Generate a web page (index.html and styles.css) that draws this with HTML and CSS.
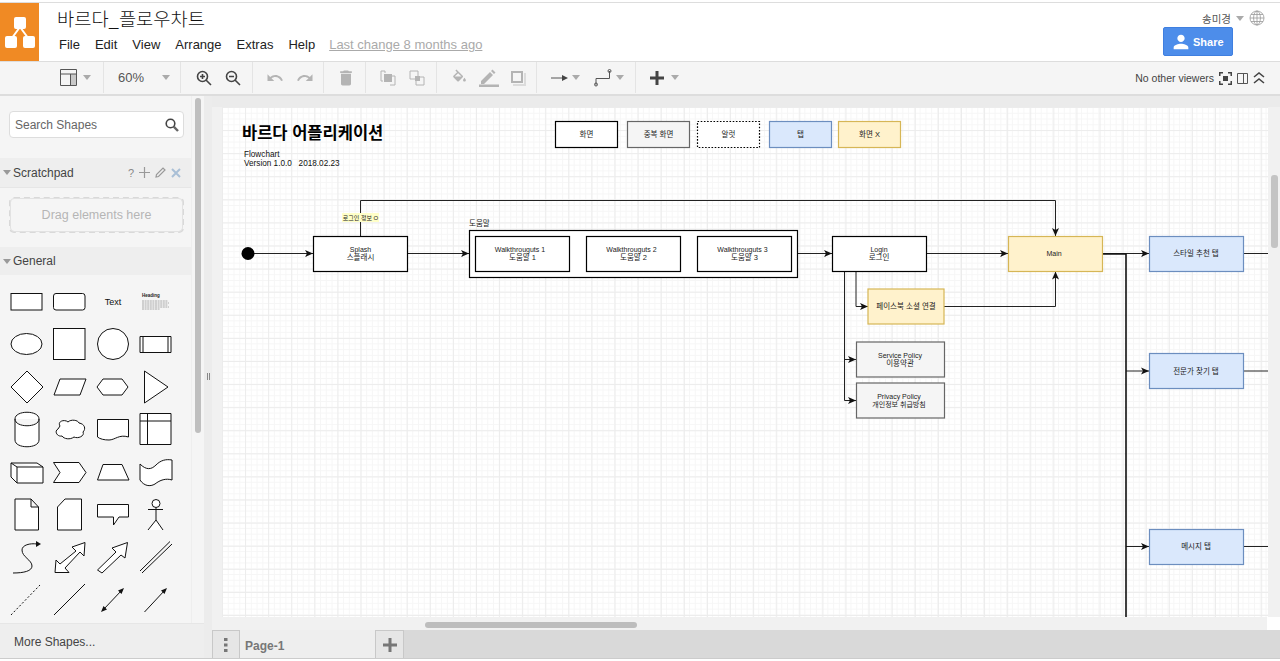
FILE: index.html
```html
<!DOCTYPE html>
<html lang="ko">
<head>
<meta charset="utf-8">
<title>바르다_플로우차트</title>
<link rel="stylesheet" href="styles.css">
</head>
<body>
<div class="app">
  <header class="header">
    <div class="logo">
      <svg width="39" height="58" viewBox="0 0 39 58"><path class="logo-link" d="M20 24 L9 39 M20 24 L31 39"/><rect class="logo-node" x="14" y="14" width="12" height="12" rx="2"/><rect class="logo-node" x="5" y="33" width="12" height="12" rx="2"/><rect class="logo-node" x="23" y="33" width="12" height="12" rx="2"/></svg>
    </div>
    <div class="doc">
      <div class="doc-title">바르다_플로우차트</div>
      <nav class="menu">
        <span>File</span><span>Edit</span><span>View</span><span>Arrange</span><span>Extras</span><span>Help</span>
        <span class="last-change">Last change 8 months ago</span>
      </nav>
    </div>
    <div class="account">
      <div class="user">
        <span>송미경</span><i class="caret"></i>
        <svg class="globe" width="16" height="16" viewBox="0 0 16 16"><circle cx="8" cy="8" r="7"/><ellipse cx="8" cy="8" rx="3.4" ry="7"/><path d="M8 1V15M1 8H15M2 4.5H14M2 11.5H14"/></svg>
      </div>
      <button class="share">
        <svg width="22" height="22" viewBox="0 0 24 24"><path d="M12 12c2.210 0 4-1.790 4-4s-1.790-4-4-4-4 1.790-4 4 1.790 4 4 4zm0 2c-2.670 0-8 1.340-8 4v2h16v-2c0-2.660-5.330-4-8-4z"/></svg>
        <span>Share</span>
      </button>
    </div>
  </header>

  <div class="toolbar">
    <div class="tb g1">
      <svg class="ic" width="17" height="17" viewBox="0 0 17 17"><path class="ln" d="M.5 .5H16.500V16.500H.5ZM.5 5H16.500M10.500 5V16.500"/><path class="fl" d="M11 5H16V16H11Z" opacity=".25"/></svg>
      <i class="caret"></i>
    </div>
    <div class="tb g2"><span class="zoom-val">60%</span><i class="caret"></i></div>
    <div class="tb g3">
      <svg class="ic" width="16" height="16" viewBox="0 0 16 16"><circle class="ln2" cx="6.500" cy="6.500" r="5"/><path class="ln2" d="M10 10L15 15M4 6.500H9M6.500 4V9"/></svg>
      <svg class="ic" width="16" height="16" viewBox="0 0 16 16"><circle class="ln2" cx="6.500" cy="6.500" r="5"/><path class="ln2" d="M10 10L15 15M4 6.500H9"/></svg>
    </div>
    <div class="tb g4 off">
      <svg width="18" height="18" viewBox="0 0 24 24"><path d="M12.500 8c-2.650 0-5.050.99-6.900 2.600L2 7v9h9l-3.620-3.620c1.390-1.160 3.160-1.880 5.120-1.880 3.540 0 6.550 2.310 7.600 5.500l2.370-.78C21.080 11.030 17.150 8 12.500 8z"/></svg>
      <svg width="18" height="18" viewBox="0 0 24 24"><path d="M18.400 10.600C16.550 8.990 14.150 8 11.500 8c-4.650 0-8.580 3.030-9.960 7.220L3.900 16c1.050-3.190 4.050-5.500 7.600-5.500 1.950 0 3.730.72 5.120 1.880L13 16h9V7l-3.600 3.600z"/></svg>
    </div>
    <div class="tb g5 off">
      <svg width="20" height="20" viewBox="0 0 24 24"><path d="M6 19c0 1.100.9 2 2 2h8c1.100 0 2-.9 2-2V7H6v12zM19 4h-3.500l-1-1h-5l-1 1H5v2h14V4z"/></svg>
    </div>
    <div class="tb g6 off">
      <svg width="16" height="16" viewBox="0 0 16 16"><path class="thin" d="M1 1H5V3M1 1V11H3M10 15H15V6H12"/><rect x="4" y="4" width="8" height="8"/></svg>
      <svg width="16" height="16" viewBox="0 0 16 16"><path class="thin" d="M1 1H9V9H1Z"/><rect x="6" y="6" width="5" height="5"/><path class="thin" d="M7 7H15V15H7Z"/></svg>
    </div>
    <div class="tb g7 off">
      <svg width="17" height="18" viewBox="0 0 24 24"><path d="M16.560 8.940L7.620 0 6.210 1.410l2.380 2.380-5.150 5.150c-.59.59-.59 1.540 0 2.120l5.500 5.500c.29.29.68.44 1.060.44s.77-.15 1.060-.44l5.500-5.500c.59-.58.59-1.530 0-2.110zM5.210 10L10 5.210 14.790 10H5.210zM19 11.500s-2 2.170-2 3.500c0 1.100.9 2 2 2s2-.9 2-2c0-1.330-2-3.500-2-3.500z"/></svg>
      <svg width="20" height="18" viewBox="0 0 20 18"><path d="M2 12L11 3L14 6L5 15H2Z M12 2L13.500 .5L16.500 3.500L15 5Z"/><rect y="15.500" width="20" height="2.500"/></svg>
      <svg width="16" height="16" viewBox="0 0 16 16"><path d="M1 1H13V13H1ZM3 3V11H11V3Z"/><path class="pale" d="M14 3H16V16H3V14H14Z"/></svg>
    </div>
    <div class="tb g8">
      <svg class="ic" width="17" height="10" viewBox="0 0 17 10"><path class="ln" d="M0 5H12"/><path class="fl" d="M11 2L17 5L11 8Z"/></svg>
      <i class="caret"></i>
      <svg class="ic wp" width="18" height="18" viewBox="0 0 18 18"><path class="ln" d="M2 16V9.500H15.500V2"/><circle class="ln" cx="2" cy="15.500" r="1.500"/><circle class="ln" cx="15.500" cy="2" r="1.500"/></svg>
      <i class="caret"></i>
    </div>
    <div class="tb g9">
      <svg class="ic" width="14" height="14" viewBox="0 0 14 14"><path class="fl" d="M5.500 0H8.500V5.500H14V8.500H8.500V14H5.500V8.500H0V5.500H5.500Z"/></svg>
      <i class="caret"></i>
    </div>
    <div class="tb-right">
      <span>No other viewers</span>
      <svg class="ic" width="13" height="13" viewBox="0 0 13 13"><path class="ln2" d="M.7 4V.7H4M9 .7H12.300V4M12.300 9V12.300H9M4 12.300H.7V9"/><rect class="fl" x="4" y="4" width="5" height="5"/></svg>
      <svg class="ic" width="11" height="11" viewBox="0 0 11 11"><path class="ln" d="M.5 .5H10.500V10.500H.5ZM6.500 .5V10.500"/></svg>
      <svg class="ic" width="12" height="12" viewBox="0 0 12 12"><path class="ln2" d="M1 5L6 1L11 5M1 11L6 7L11 11"/></svg>
    </div>
  </div>

  <div class="main">
    <aside class="sidebar">
      <div class="sidebar-scroll">
        <div class="search">
          <span>Search Shapes</span>
          <svg class="ic" width="14" height="14" viewBox="0 0 14 14"><circle class="ln2" cx="5.500" cy="5.500" r="4.300"/><path class="ln3" d="M8.700 8.700L13 13"/></svg>
        </div>
        <div class="section scratch">
          <i class="caret"></i><span class="section-name">Scratchpad</span>
          <span class="sec-tools">
            <span class="q">?</span>
            <svg width="11" height="11" viewBox="0 0 11 11"><path d="M5.500 0V11M0 5.500H11" class="gr"/></svg>
            <svg width="11" height="11" viewBox="0 0 11 11"><path d="M1 10L1.500 7.500L8 1L10 3L3.500 9.500Z" class="gr"/></svg>
            <svg width="10" height="10" viewBox="0 0 10 10"><path d="M1 1L9 9M9 1L1 9" class="bl"/></svg>
          </span>
        </div>
        <div class="drop">Drag elements here</div>
        <div class="section general"><i class="caret"></i><span class="section-name">General</span></div>
        <svg class="palette" width="192" height="343" viewBox="0 280 192 343">
          <g class="shp">
            <rect x="11" y="293.500" width="31" height="16.500"/>
            <rect x="53.500" y="293.500" width="31.500" height="16.500" rx="2.500"/>
            <ellipse cx="26.500" cy="344" rx="15.500" ry="10.500"/>
            <rect x="53.500" y="328.500" width="31.500" height="31"/>
            <circle cx="113" cy="344" r="15.500"/>
            <path d="M140 336.500H171V352.500H140ZM143 336.500V352.500M168 336.500V352.500"/>
            <path d="M27 371L43 387L27 403L11 387Z"/>
            <path d="M60 379H86L80 395H54Z"/>
            <path d="M103 379H122L128 387L122 395H103L97 387Z"/>
            <path d="M144.500 371L168 387L144.500 403Z"/>
            <path d="M15 419C15 410 39 410 39 419V440C39 449 15 449 15 440ZM15 419C15 428 39 428 39 419"/>
            <path d="M60 426C57 421 65 419 68 422C71 419 78 420 79 423C85 424 86 429 83 432C85 436 78 439 74 437C70 440 64 439 62 436C57 437 54 431 58 429Z"/>
            <path d="M97.500 419.500H128.500V437C119 434 115 440 109 440C104 440 100 439 97.500 437Z"/>
            <path d="M140 413.500H171V444.500H140ZM140 421H171M147.500 413.500V444.500"/>
            <path d="M11 463H37L43 467V483H17L11 477ZM11 463L17 467H43M17 467V483"/>
            <path d="M53.500 462.500H79L86 472.500L79 482.500H53.500L60 472.500Z"/>
            <path d="M103 464.500H122L129 480H97.500Z"/>
            <path d="M140 464C146 470 151 470 156 465C161 460 166 459 172 460V480C166 478 160 480 155 484C150 487 144 486 140 480Z"/>
            <path d="M15 499H31L38.500 507V530H15ZM31 499V507H38.500"/>
            <path d="M65 499H81.500V530H57.500V507Z"/>
            <path d="M97.500 504.500H128.500V517H119L113.500 525V517H97.500Z"/>
            <circle cx="156" cy="503.500" r="4"/>
            <path d="M156 507.500V520M148 509.500H163M148 530L156 520L163 530"/>
            <path d="M13 573C24 573 32 571 32 566C32 560 22 557 22 550C22 545 30 543 37 544" class="open"/>
            <path d="M36 541L41 544L36 547Z" class="solid"/>
            <path d="M55 572.500L56 560L60 564L76 551L72 547L85 542.500L84 556L80 552L65 568L69 572.500Z"/>
            <path d="M97.500 570L116 552L112 548L127.500 542.500L125 558L121 555L102 573Z"/>
            <path d="M140 571L170 541.500M142 573L172 544" class="open"/>
            <path d="M11 615L40 585" class="dash"/>
            <path d="M54 615L85 584" class="open"/>
            <path d="M103 610L122 590" class="open"/>
            <path d="M101 612L107 609.500L103.500 606Z M124 588L118 590.500L121.500 594Z" class="solid"/>
            <path d="M144.500 612L165 590" class="open"/>
            <path d="M167 588L161 590.500L164.500 594Z" class="solid"/>
          </g>
          <text x="113" y="304.500" class="pal-text">Text</text>
          <text x="142" y="297" class="pal-head">Heading</text>
          <path class="pal-lines" d="M142 301H168M142 303H169M142 305H168M142 307H169M142 309H160"/>
        </svg>
      </div>
      <div class="side-thumb"></div>
      <div class="more">More Shapes...</div>
    </aside>
    <div class="splitter"><span class="grip"></span></div>
    <div class="work">
      <div class="stage">
        <div class="canvas">
          <svg class="diagram" width="1046" height="510" viewBox="222 107 1046 510">
            <defs>
              <marker id="ah" markerWidth="9" markerHeight="8" refX="8" refY="4" orient="auto" markerUnits="userSpaceOnUse"><path d="M0 .5L8 4L0 7.500L2 4Z" fill="#111"/></marker>
            </defs>
            <text class="d-title" x="242" y="139">바르다 어플리케이션</text>
            <text class="d-sub" x="244" y="157">Flowchart</text>
            <text class="d-sub" x="244" y="165.500" xml:space="preserve">Version 1.0.0   2018.02.23</text>

            <rect class="b" x="555.500" y="121.500" width="62" height="26"/><text class="t" x="586.500" y="137">화면</text>
            <rect class="b gray" x="627.500" y="121.500" width="62" height="26"/><text class="t" x="658.500" y="137">중복 화면</text>
            <rect class="b dashed" x="697.500" y="121.500" width="62" height="26"/><text class="t" x="728.500" y="137">알럿</text>
            <rect class="b blue" x="769.500" y="121.500" width="62" height="26"/><text class="t" x="800.500" y="137">탭</text>
            <rect class="b yellow" x="838.500" y="121.500" width="62" height="26"/><text class="t" x="869.500" y="137">화면 X</text>

            <g class="edge">
              <path d="M254 253.500H313" marker-end="url(#ah)"/>
              <path d="M408 253.500H469" marker-end="url(#ah)"/>
              <path d="M569.500 253.500H586" marker-end="url(#ah)"/>
              <path d="M680.500 253.500H697" marker-end="url(#ah)"/>
              <path d="M798 253.500H832" marker-end="url(#ah)"/>
              <path d="M927 253.500H1008" marker-end="url(#ah)"/>
              <path d="M1103 253.500H1149" marker-end="url(#ah)"/>
              <path d="M360.500 236V200.500H1055.500V236" marker-end="url(#ah)"/>
              <path d="M856 271V306.500H868" marker-end="url(#ah)"/>
              <path d="M844.500 271V359.500H856" marker-end="url(#ah)"/>
              <path d="M844.500 359V400.500H856" marker-end="url(#ah)"/>
              <path d="M944 306.500H1055.500V271.500" marker-end="url(#ah)"/>
              <path d="M1126 371H1149" marker-end="url(#ah)"/>
              <path d="M1126 546.500H1149" marker-end="url(#ah)"/>
              <path d="M1244 253.500H1268M1244 371H1268M1244 546.500H1268"/>
            </g>
            <path class="trunk" d="M1103 254H1126V617"/>

            <circle cx="248" cy="253.500" r="6.500" fill="#000"/>
            <rect class="lbl-bg" x="342" y="213" width="37" height="9"/>
            <text class="t small" x="360.500" y="220">로그인 정보 O</text>
            <text class="t start" x="469" y="226">도움말</text>

            <rect class="b" x="313.500" y="236.500" width="94" height="35"/>
            <text class="t lat" x="360.500" y="252">Splash</text><text class="t" x="360.500" y="260">스플래시</text>

            <rect class="b" x="469.500" y="230.500" width="328" height="47"/>
            <rect class="b" x="475.500" y="236.500" width="94" height="35"/>
            <text class="t lat" x="520" y="252">Walkthrouguts 1</text><text class="t" x="522.500" y="260">도움말 1</text>
            <rect class="b" x="586.500" y="236.500" width="94" height="35"/>
            <text class="t lat" x="631.500" y="252">Walkthrouguts 2</text><text class="t" x="633.500" y="260">도움말 2</text>
            <rect class="b" x="697.500" y="236.500" width="94" height="35"/>
            <text class="t lat" x="742.500" y="252">Walkthrouguts 3</text><text class="t" x="744.500" y="260">도움말 3</text>
            <rect class="b" x="832.500" y="236.500" width="94" height="35"/>
            <text class="t lat" x="879" y="252">Login</text><text class="t" x="879" y="260">로그인</text>
            <rect class="b yellow" x="1008.500" y="236.500" width="94" height="35"/>
            <text class="t lat" x="1054" y="256">Main</text>
            <rect class="b blue" x="1149.500" y="236.500" width="94" height="35"/>
            <text class="t" x="1196" y="256">스타일 추천 탭</text>
            <rect class="b blue" x="1149.500" y="353.500" width="94" height="35"/>
            <text class="t" x="1196" y="373.500">전문가 찾기 탭</text>
            <rect class="b blue" x="1149.500" y="529.500" width="94" height="35"/>
            <text class="t" x="1196" y="549">메시지 탭</text>
            <rect class="b yellow" x="868" y="289" width="76" height="35"/>
            <text class="t" x="906" y="309">페이스북 소셜 연결</text>
            <rect class="b gray" x="856.500" y="342" width="88" height="35"/>
            <text class="t lat" x="900" y="358">Service Policy</text><text class="t" x="900" y="365.500">이용약관</text>
            <rect class="b gray" x="856.500" y="383" width="88" height="35"/>
            <text class="t lat" x="899" y="399">Privacy Policy</text><text class="t tight" x="899" y="407">개인정보 취급방침</text>
          </svg>
        </div>
        <div class="v-thumb"></div>
        <div class="h-thumb"></div>
        <div class="corner"></div>
      </div>
      <div class="tabs">
        <div class="tab-menu"><svg width="4" height="14" viewBox="0 0 4 14"><path d="M0 0H3.500V3H0ZM0 5.500H3.500V8.500H0ZM0 11H3.500V14H0Z"/></svg></div>
        <div class="tab-page">Page-1</div>
        <div class="tab-add"><svg width="14" height="14" viewBox="0 0 14 14"><path d="M5.500 0H8.500V5.500H14V8.500H8.500V14H5.500V8.500H0V5.500H5.500Z"/></svg></div>
      </div>
    </div>
  </div>
</div>
</body>
</html>
```

FILE: styles.css
```css
* { box-sizing: border-box; }
html, body { margin: 0; height: 100%; overflow: hidden; background: #fff; }
body { font-family: "Liberation Sans", "Noto Sans CJK KR", sans-serif; color: #222; }
i { font-style: normal; }

.app { height: 661px; padding: 2px 0; display: flex; flex-direction: column; }

.header { height: 60px; flex: none; display: flex; border-top: 1px solid #ddd; border-bottom: 1px solid #ddd; background: #fff; }
.logo { width: 39px; background: #f08a24; flex: none; }
.logo svg { display: block; }
.logo-node { fill: #fff; }
.logo-link { stroke: #fff; stroke-width: 2; fill: none; }
.doc { padding-left: 18px; }
.doc-title { font-size: 18.700px; line-height: 22px; margin-top: 4px; color: #111; font-family: "Noto Sans CJK KR", sans-serif; font-weight: 300; }
.menu { display: flex; gap: 15px; margin: 6px 0 0 2px; font-size: 13px; line-height: 20px; color: #222; }
.last-change { color: #aaa; text-decoration: underline; margin-left: -1px; }

.account { margin-left: auto; display: flex; flex-direction: column; align-items: flex-end; }
.user { display: flex; align-items: center; gap: 5px; height: 18px; margin-top: 6px; padding-right: 15px; font-size: 10.500px; color: #555; }
.globe { fill: none; stroke: #999; stroke-width: .8; margin-left: 0; }
.share { width: 70px; height: 29px; margin: 0 47px 0 0; padding: 0 0 0 6px; display: flex; align-items: center; gap: 1px; background: #4d8dea; border: 1px solid #3f7fe0; border-radius: 2px; color: #fff; font: bold 11px "Liberation Sans", sans-serif; }
.share svg { fill: #fff; }

.caret { display: inline-block; width: 0; height: 0; border: 4.500px solid transparent; border-top: 5px solid #aaa; border-bottom: 0; flex: none; }

.toolbar { height: 34px; flex: none; display: flex; align-items: stretch; padding: 0 0 1px 46px; background: #f5f5f5; border-bottom: 2px solid #ddd; }
.tb { display: flex; align-items: center; padding-left: 14px; border-right: 1px solid #e4e4e4; flex: none; }
.g1 { width: 58px; gap: 6px; }
.g2 { width: 77px; gap: 18px; font-size: 13px; color: #555; }
.g3 { width: 72px; gap: 13px; padding-left: 15px; }
.g4 { width: 71px; gap: 12px; padding-left: 13px; }
.g5 { width: 42px; padding-left: 12px; }
.g6 { width: 71px; gap: 13px; }
.g7 { width: 100px; gap: 11px; }
.g8 { width: 99px; gap: 4px; }
.g9 { border-right: 0; gap: 7px; }
.wp { margin-left: 10px; }
.off svg { fill: #b4b4b4; }
.off .thin { fill: none; stroke: #b4b4b4; stroke-width: 1; }
.off .pale { fill: #dcdcdc; }
.ic { flex: none; }
.ln { fill: none; stroke: #555; stroke-width: 1; }
.ln2 { fill: none; stroke: #444; stroke-width: 1.600; }
.ln3 { fill: none; stroke: #666; stroke-width: 2.400; }
.fl { fill: #444; }
.tb-right { margin-left: auto; display: flex; align-items: center; padding: 1px 15px 0 0; font-size: 10.500px; color: #444; }
.tb-right svg { margin-left: 5px; }

.main { flex: 1; min-height: 0; display: flex; border-bottom: 1px solid #ccc; }

.sidebar { width: 204px; flex: none; position: relative; background: #f5f5f5; display: flex; flex-direction: column; }
.sidebar-scroll { flex: 1; min-height: 0; overflow: hidden; width: 192px; padding-top: 15px; border-right: 1px solid #eee; }
.search { margin-left: 9px; width: 175px; height: 27px; display: flex; align-items: center; justify-content: space-between; padding: 0 4px 0 5px; background: #fff; border: 1px solid #ddd; border-radius: 4px; font-size: 12px; color: #666; }
.section { height: 30px; display: flex; align-items: center; background: #eee; font-size: 12px; color: #444; padding-left: 3px; }
.section .caret { border-top-color: #999; margin-right: 2px; }
.scratch { margin-top: 20px; border-bottom: 1px solid #e6e6e6; }
.general { margin-top: 14px; height: 28px; }
.sec-tools { margin-left: auto; margin-right: 10px; display: flex; align-items: center; gap: 5px; }
.q { font-size: 11px; color: #888; }
.gr { fill: none; stroke: #999; stroke-width: 1.200; }
.bl { fill: none; stroke: #a9bfd6; stroke-width: 2; }
.drop { margin: 9px 0 0 9px; width: 175px; height: 36px; display: flex; align-items: center; justify-content: center; border: 2px dashed #d9d9d9; border-radius: 5px; font-size: 12.500px; color: #b5b5b5; outline: 1px solid #e2e2e2; outline-offset: -2px; }
.palette { display: block; margin-top: 5px; }
.shp path, .shp rect, .shp ellipse, .shp circle { fill: #fff; stroke: #111; stroke-width: 1; }
.shp .open { fill: none; }
.shp .solid { fill: #111; stroke: none; }
.shp .dash { fill: none; stroke-dasharray: 2 2; }
.pal-text { font-size: 9px; text-anchor: middle; fill: #111; }
.pal-head { font-size: 4.500px; font-weight: bold; fill: #222; }
.pal-lines { stroke: #aaa; stroke-width: 1; stroke-dasharray: 2 .6; fill: none; }
.side-thumb { position: absolute; left: 195px; top: 2px; width: 6px; height: 335px; background: #bfbfbf; border-radius: 3px; }
.more { height: 35px; flex: none; display: flex; align-items: center; padding: 1px 0 0 14px; background: #eee; border-top: 1px solid #e6e6e6; font-size: 12px; color: #444; }

.splitter { width: 8px; flex: none; position: relative; background: #ececec; }
.grip { position: absolute; left: 3px; top: 277px; width: 3px; height: 7px; border-left: 1px solid #888; border-right: 1px solid #888; }

.work { flex: 1; min-width: 0; display: flex; flex-direction: column; background: #ededed; }
.stage { flex: 1; min-height: 0; position: relative; padding: 11px 12px 13px 10px; background: linear-gradient(#ebebeb, #ebebeb) top / 100% 11px no-repeat, #f1f1f1; }
.canvas { height: 100%; overflow: hidden; background-color: #fff;
  background-image:
    linear-gradient(to right, #ececec 1px, transparent 1px),
    linear-gradient(to bottom, #ececec 1px, transparent 1px),
    linear-gradient(to right, #f6f6f6 1px, transparent 1px),
    linear-gradient(to bottom, #f6f6f6 1px, transparent 1px);
  background-size: 23.100px 23.100px, 23.100px 23.100px, 5.775px 5.775px, 5.775px 5.775px; }
.diagram { display: block; }
.v-thumb { position: absolute; right: 2px; top: 79px; width: 7px; height: 73px; background: #c4c4c4; border-radius: 3px; }
.h-thumb { position: absolute; left: 213px; bottom: 2px; width: 212px; height: 6px; background: #bdbdbd; border-radius: 3px; }
.corner { position: absolute; right: 0; bottom: 0; width: 13px; height: 13px; background: #fff; }

.b { fill: #fff; stroke: #000; stroke-width: 1.200; }
.gray { fill: #f5f5f5; stroke: #666; }
.dashed { stroke-dasharray: 1.600 1.600; }
.blue { fill: #dae8fc; stroke: #6c8ebf; }
.yellow { fill: #fff2cc; stroke: #d6b656; }
.edge path { fill: none; stroke: #222; stroke-width: 1; }
.trunk { fill: none; stroke: #111; stroke-width: 1.600; }
.lbl-bg { fill: #ffffc8; }
.t { font-size: 7.500px; text-anchor: middle; fill: #222; }
.t.lat { font-size: 7px; }
.t.tight { font-size: 7px; }
.t.small { font-size: 6px; }
.t.start { text-anchor: start; }
.d-title { font-size: 16.500px; font-weight: 700; fill: #000; font-family: "Noto Sans CJK KR", sans-serif; }
.d-sub { font-size: 8.200px; fill: #111; }

.tabs { height: 28px; flex: none; display: flex; background: #d9d9d9; }
.tab-menu { width: 28px; display: flex; align-items: center; justify-content: center; background: #e6e6e6; border: 1px solid #c8c8c8; border-bottom: 0; }
.tab-menu svg, .tab-add svg { fill: #777; }
.tab-page { width: 135px; display: flex; align-items: center; padding: 3px 0 0 5px; background: #eee; font-size: 12px; font-weight: bold; color: #777; }
.tab-add { width: 29px; display: flex; align-items: center; justify-content: center; background: #e6e6e6; border: 1px solid #c8c8c8; border-bottom: 0; }
```
